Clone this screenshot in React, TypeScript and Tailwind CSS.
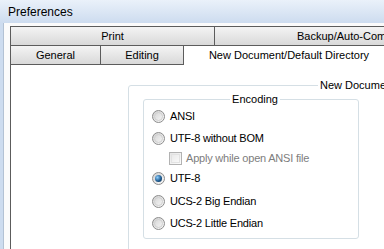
import React from "react";

const TAB =
  "h-full flex items-center border-t border-l border-[#5c5c5c] bg-gradient-to-b from-[#f4f4f4] to-[#d9d9d9] text-[11px] leading-none";

function Radio({ checked }: { checked?: boolean }) {
  return (
    <div className="w-[13px] h-[13px] shrink-0 rounded-full border border-[#8c8c8c] bg-gradient-to-br from-[#d2d2d2] to-[#fafafa] flex items-center justify-center">
      {checked ? (
        <div className="w-[7px] h-[7px] rounded-full bg-[radial-gradient(circle_at_35%_35%,#8fd0ff,#1f5c92_55%,#0b2540)]" />
      ) : (
        <div className="w-[9px] h-[9px] rounded-full border border-[#d0d0d0] bg-gradient-to-br from-[#d9d9d9] to-[#f3f3f3]" />
      )}
    </div>
  );
}

function Option({ label, checked, className = "" }: { label: string; checked?: boolean; className?: string }) {
  return (
    <div className={`flex items-center h-[14px] gap-[5px] ${className}`}>
      <Radio checked={checked} />
      <span className="text-[11px] tracking-[-0.2px] text-black leading-none">{label}</span>
    </div>
  );
}

export default function App() {
  return (
    <div className="w-[384px] h-[249px] overflow-hidden flex flex-col bg-white font-['Liberation_Sans',Arial,sans-serif] text-black">
      {/* title bar */}
      <div className="h-[23px] shrink-0 flex items-center pl-[8px] pt-[1px] text-[12px] bg-gradient-to-b from-[#eaf1fa] to-[#cddcef]">
        Preferences
      </div>

      <div className="flex-1 flex min-h-0">
        <div className="w-[4px] shrink-0 bg-[#cddcef] border-r border-[#b3c2d4]" />

        <div className="flex-1 min-w-0 pl-[6px] pt-[3px] bg-[#fbfbfb]">
          <div className="w-[420px] h-full flex flex-col">
            {/* back tab row */}
            <div className="h-[19px] flex shrink-0">
              <div className={`${TAB} w-[204px] justify-center`}>Print</div>
              <div className={`${TAB} flex-1 pl-[82px]`}>Backup/Auto-Completion</div>
            </div>
            {/* front tab row */}
            <div className="h-[20px] flex shrink-0">
              <div className={`${TAB} w-[90px] justify-center border-b`}>General</div>
              <div className={`${TAB} w-[83px] justify-center border-b`}>Editing</div>
              <div className="h-full w-[212px] flex items-center justify-center border-t border-l border-r border-[#5c5c5c] bg-white text-[11px] leading-none">
                New Document/Default Directory
              </div>
              <div className="flex-1 border-b border-[#5c5c5c]" />
            </div>

            {/* page */}
            <div className="flex-1 border-l border-[#5c5c5c] bg-white pl-[117px] pt-[13px]">
              <fieldset className="w-[300px] h-[200px] border border-[#d5dfe5] rounded-[3px]">
                <legend className="ml-[189px] px-[2px] text-[11px] leading-[14px]">New Document</legend>

                <fieldset className="ml-[14px] w-[216px] border border-[#d5dfe5] rounded-[3px] pl-[8px] pt-[3px] pb-[8px]">
                  <legend className="mx-auto px-[2px] text-[11px] leading-[14px]">Encoding</legend>
                  <div className="flex flex-col">
                    <Option label="ANSI" />
                    <Option label="UTF-8 without BOM" className="mt-[8px]" />
                    <div className="flex items-center h-[14px] gap-[4px] pl-[17px] mt-[6px]">
                      <div className="w-[13px] h-[13px] border border-[#b2b2b2] bg-gradient-to-br from-[#e6e6e6] to-[#fcfcfc] flex items-center justify-center">
                        <div className="w-[9px] h-[9px] border border-[#e2e2e2]" />
                      </div>
                      <span className="text-[11px] tracking-[-0.2px] text-[#7d7d7d] leading-none">
                        Apply while open ANSI file
                      </span>
                    </div>
                    <Option label="UTF-8" checked className="mt-[6px]" />
                    <Option label="UCS-2 Big Endian" className="mt-[9px]" />
                    <Option label="UCS-2 Little Endian" className="mt-[8px]" />
                  </div>
                </fieldset>
              </fieldset>
            </div>
          </div>
        </div>
      </div>
    </div>
  );
}
